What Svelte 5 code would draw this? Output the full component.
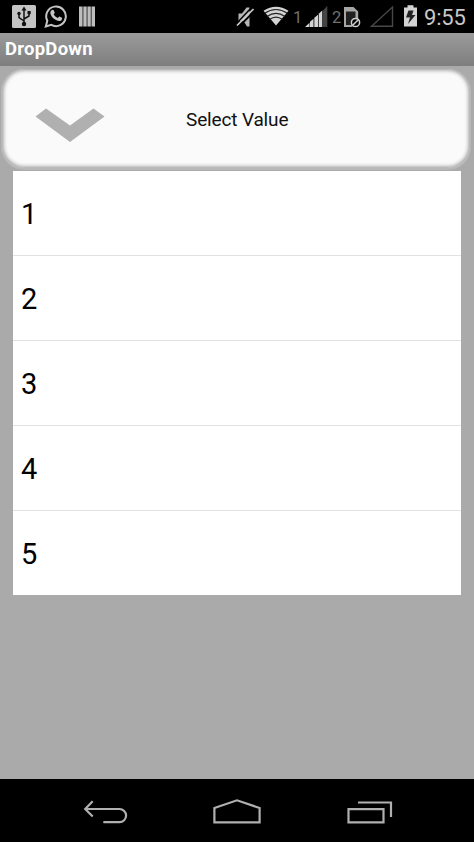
<script>
  let items = ["1", "2", "3", "4", "5"];
  let open = true;
  let selected = undefined;

  $: label = selected ? selected : "Select Value";

  function toggle() {
    open = !open;
  }

  function select(item) {
    selected = item;
    open = false;
  }
</script>

<div class="screen">
  <div class="status-bar">
    <div class="notifications">
      <svg width="24" height="33" viewBox="0 0 24 33">
        <rect x="0" y="5" width="24" height="23" rx="1.5" fill="#c4c4c4" />
        <g stroke="#111" stroke-width="1.5" fill="none">
          <path d="M12 9v15M12 21l-5-3.500v-4M12 19l5-3v-4" />
        </g>
        <path d="M12 6.500l2.500 4h-5z" fill="#111" />
        <circle cx="12" cy="24" r="2.200" fill="#111" />
        <circle cx="7" cy="13.500" r="1.700" fill="#111" />
        <rect x="15.500" y="11" width="3.200" height="3.200" fill="#111" />
      </svg>
      <svg width="24" height="33" viewBox="0 0 24 33">
        <path
          d="M1.800 26.500l1.500-5.700a9.800 9.800 0 1 1 4 4.100z"
          fill="none"
          stroke="#c4c4c4"
          stroke-width="2" />
        <path
          d="M7.500 10.300c1-1 2-.7 2.300.1l.9 2.100c.2.600-.7 1.300-1 1.800 1 1.700 2.200 2.800 4.200 3.700.6-.4 1.100-1.500 1.700-1.400l2.300 1.200c.7.400 0 2-.7 2.600-1.300 1-3 .8-5.200-.3-2.600-1.300-4.300-3.300-5.300-5.600-.7-1.700-.3-3.200.8-4.200z"
          fill="#c4c4c4" />
      </svg>
      <svg class="bars" width="17" height="33" viewBox="0 0 17 33">
        <path
          d="M0 6.500h3.600v20H0zM4.300 6.500h3.400v20H4.300zM8.400 6.500h3.400v20H8.400zM12.500 6.500h3.500v20h-3.500z"
          fill="#bdbdbd" />
      </svg>
    </div>

    <div class="system">
      <svg class="mute" width="19" height="33" viewBox="236 0 19 33">
        <path d="M238.500 13.500h3.500l4.500-6h3v19h-2.500l-3.500-5.500h-5z" fill="#b5b5b5" />
        <path d="M238.500 27l16-16" stroke="#000" stroke-width="1.800" />
        <path d="M236 24l16-17" stroke="#000" stroke-width="1.500" />
        <path d="M237 25.500l16.500-16.500" stroke="#ccc" stroke-width="1.700" />
      </svg>
      <svg class="wifi" width="26" height="33" viewBox="263 0 26 33">
        <path d="M263.500 10.700Q276 2.700 288.500 10.700L276 25.500z" fill="#d3d3d3" />
        <g fill="none" stroke="#222" stroke-width="1.100">
          <path d="M264.500 13.200Q276 5.700 287.500 13.200" />
          <path d="M267 16.500Q276 10.200 285 16.500" />
          <path d="M269.500 19.500Q276 14.700 282.500 19.500" />
        </g>
      </svg>
      <span class="sim">1</span>
      <svg class="signal" width="23" height="33" viewBox="305 0 23 33">
        <path d="M323 10.500l4.300-4.500v21H323z" fill="#444" />
        <path
          d="M305 27l4.500-4.300V27zM310 21.700l3.500-3V27H310zM314.300 17.800l3.700-3V27h-3.700zM318.700 13.800l3.600-3.300V27h-3.600z"
          fill="#d3d3d3" />
      </svg>
      <span class="sim">2</span>
      <svg width="18" height="33" viewBox="343 0 18 33">
        <path d="M344 27V7h9.500l4.700 4.500V19l-4 6-2.500 2z" fill="#a6a6a6" />
        <path d="M346 11.500h9.500v7l-4 4v2.500H346z" fill="#202020" />
        <circle cx="355.500" cy="22.500" r="4.100" fill="#000" stroke="#d0d0d0" stroke-width="1.500" />
        <path d="M352.700 25.300l5.600-5.600" stroke="#d0d0d0" stroke-width="1.500" />
      </svg>
      <svg class="empty" width="24" height="33" viewBox="370 0 24 33">
        <path d="M371.500 26.300h21V7z" fill="none" stroke="#484848" stroke-width="1.400" />
      </svg>
      <svg class="battery" width="15" height="33" viewBox="403 0 15 33">
        <path d="M404 7.500h3.500V5.300h6v2.200h3.500v19H404z" fill="#d3d3d3" />
        <path d="M408.500 10.500h5l-1.500 4.500h3.500l-7.500 9 2-6.500h-4z" fill="#222" />
      </svg>
      <span class="clock">9:55</span>
    </div>
  </div>

  <div class="title-bar">DropDown</div>

  <div class="content">
    <button class="dropdown" on:click={toggle}>
      <svg width="70" height="36" viewBox="0 0 70 36">
        <path d="M.5 9.500L11 1.500 35 18.500 58.500 1.500 69.500 9.500 35 35z" fill="#b0b0b0" />
      </svg>
      <span class="label">{label}</span>
    </button>

    {#if open}
      <div class="list">
        {#each items as item}
          <button class="item" on:click={() => select(item)}>{item}</button>
        {/each}
      </div>
    {/if}
  </div>

  <div class="nav-bar">
    <svg width="46" height="26" viewBox="0 0 46 26">
      <path
        d="M2 10h34.500a6.600 6.600 0 0 1 0 13.200H20.300M9.700 2.300L2.200 10l7.500 7.500"
        fill="none"
        stroke="#b0b0b0"
        stroke-width="2.200" />
    </svg>
    <svg width="48" height="26" viewBox="0 0 48 26">
      <path
        d="M1.400 23.400V9L24 1.300 46.600 9v14.400z"
        fill="none"
        stroke="#b0b0b0"
        stroke-width="2.200" />
    </svg>
    <svg class="recents" width="46" height="26" viewBox="0 0 46 26">
      <path
        d="M1.500 10.200h35v13.200h-35zM11 3.500h33V18"
        fill="none"
        stroke="#b0b0b0"
        stroke-width="2.200" />
    </svg>
  </div>
</div>

<style>
  :global(body) {
    margin: 0;
    background: #000;
  }

  .screen {
    display: flex;
    flex-direction: column;
    width: 474px;
    height: 842px;
    overflow: hidden;
    font-family: Roboto, "Noto Sans", sans-serif;
    background: #aaa;
  }

  svg {
    display: block;
    flex: none;
  }

  .status-bar {
    display: flex;
    flex: none;
    justify-content: space-between;
    height: 33px;
    background: #000;
  }

  .notifications {
    display: flex;
    gap: 8px;
    padding-left: 12px;
  }

  .bars {
    margin-left: 3px;
  }

  .system {
    display: flex;
    width: 238px;
  }

  .wifi {
    margin-left: 8px;
  }

  .sim {
    width: 11px;
    margin-left: 4px;
    font-size: 16.5px;
    line-height: 36px;
    color: #707070;
  }

  .signal {
    margin-left: 1px;
  }

  .empty {
    margin-left: 9px;
  }

  .battery {
    margin-left: 9px;
  }

  .clock {
    margin-left: 6px;
    font-size: 22px;
    line-height: 36px;
    letter-spacing: -0.2px;
    color: #c8c8c8;
  }

  .title-bar {
    flex: none;
    box-sizing: border-box;
    height: 33px;
    padding-left: 5px;
    font-size: 18.5px;
    font-weight: bold;
    letter-spacing: 0.25px;
    line-height: 33px;
    color: #fff;
    background: linear-gradient(#9b9b9b, #7e7e7e);
  }

  .content {
    flex: 1;
    padding-top: 3px;
  }

  button {
    border: 0;
    font-family: inherit;
    color: #000;
  }

  .dropdown {
    display: flex;
    align-items: center;
    box-sizing: border-box;
    width: 468px;
    height: 99px;
    margin-left: 2px;
    padding: 0 0 0 33px;
    border-radius: 22px;
    background: #fafafa;
    box-shadow: inset 0 0 4px 1px #8c8c8c, 0 1px 0 1px #b8b8b8;
  }

  .dropdown svg {
    margin-top: 12px;
  }

  .label {
    margin: 2px 0 0 81px;
    font-size: 19px;
    line-height: 24px;
    letter-spacing: -0.15px;
    color: #111;
  }

  .list {
    width: 448px;
    margin: 3px 0 0 13px;
    background: #fff;
  }

  .item {
    display: block;
    box-sizing: border-box;
    width: 100%;
    height: 85px;
    padding: 2px 0 0 8px;
    border-bottom: 1px solid #e2e2e2;
    background: #fff;
    font-size: 29px;
    text-align: left;
  }

  .item:last-child {
    height: 84px;
    border-bottom: 0;
  }

  .nav-bar {
    display: flex;
    flex: none;
    box-sizing: border-box;
    gap: 84px;
    height: 63px;
    padding: 20px 0 0 83px;
    background: #000;
  }

  .recents {
    margin-left: 2px;
  }
</style>
